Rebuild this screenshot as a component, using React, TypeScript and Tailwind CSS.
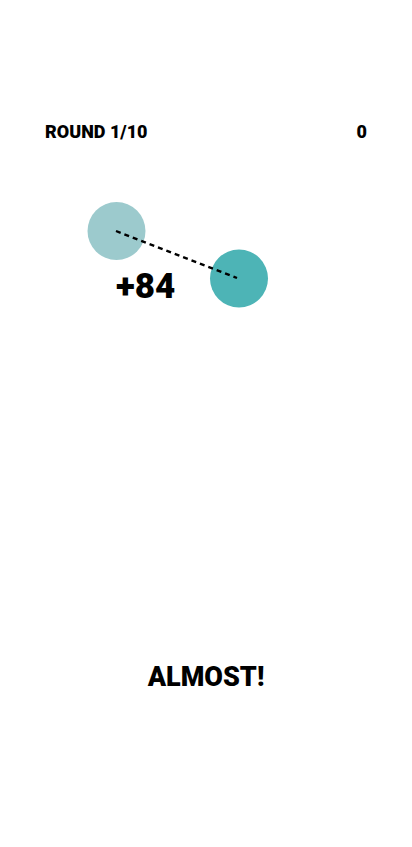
export default function App() {
  return (
    <div
      className="flex h-[847px] w-full flex-col bg-white text-black"
      style={{ fontFamily: 'Roboto, "Liberation Sans", sans-serif' }}
    >
      <div className="mt-[123px] flex justify-between px-[45px] text-[18px] font-black leading-none">
        <span>ROUND 1/10</span>
        <span>0</span>
      </div>

      <div className="relative h-[200px] w-full">
        <svg className="block h-full w-full" viewBox="0 0 412 200" fill="none">
          <circle cx="116.5" cy="90" r="29" fill="#9ccacd" />
          <circle cx="239" cy="137.5" r="29" fill="#4db4b6" />
          <line
            x1="116"
            y1="90"
            x2="237"
            y2="137"
            stroke="#000"
            strokeWidth="2.4"
            strokeDasharray="5 4"
          />
        </svg>
        <span className="absolute left-[116px] top-[128px] text-[35px] font-black leading-none">
          +84
        </span>
      </div>

      <div className="mt-[323px] text-center text-[27px] font-black leading-none">
        ALMOST!
      </div>
    </div>
  )
}
